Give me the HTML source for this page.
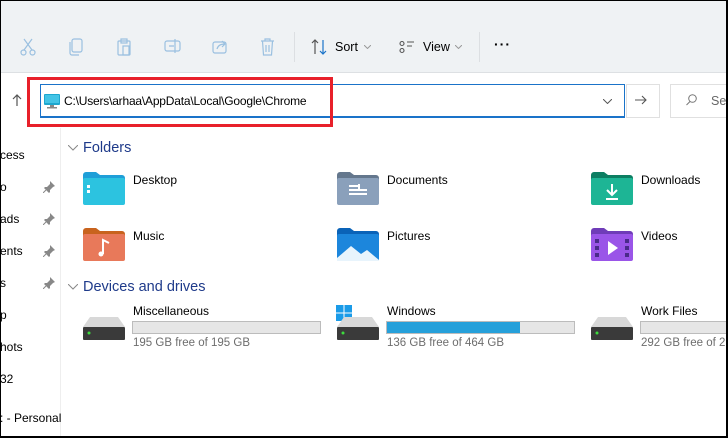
<!DOCTYPE html>
<html><head><meta charset="utf-8"><style>
*{margin:0;padding:0;box-sizing:border-box}
body{width:728px;height:438px;overflow:hidden;background:#fff;font-family:"Liberation Sans","Segoe UI",sans-serif;position:relative;color:#000}
.frame{position:absolute;left:0;top:0;width:728px;height:438px;border:1px solid #000;border-right-width:2px;border-bottom-width:2px;pointer-events:none;z-index:10}
.tb{position:absolute;left:0;top:0;width:728px;height:73px;background:#eff2f4;border-bottom:1px solid #dde0e3}
.ic{position:absolute;top:38px}
.t{position:absolute;font-size:12px;white-space:nowrap}
.sep{position:absolute;top:32px;width:1px;height:30px;background:#dcdfe2}
.addr{position:absolute;left:40px;top:84px;width:585px;height:34px;border:1px solid #1a73c9;border-bottom:2px solid #1a73c9}
.red{position:absolute;left:27px;top:77px;width:306px;height:50px;border:3px solid #e8202a;z-index:5}
.box{position:absolute;border:1px solid #e0e0e0;background:#fff}
.side{position:absolute;left:60px;top:128px;width:1px;height:310px;background:#eee}
.h{position:absolute;font-size:14.5px;color:#1e3a8a}
.bar{position:absolute;height:13px;border:1px solid #bcbcbc;background:#e6e6e6}
.sub{position:absolute;font-size:11.5px;color:#6d6d6d;white-space:nowrap}
.pin{position:absolute;left:43px}
</style></head><body>
<div class="tb"></div>
<svg class="ic" style="left:20px" width="16" height="18" viewBox="0 0 16 18" fill="none" stroke="#9ac0e0" stroke-width="1.2"><path d="M4 1l8 11M12 1L4 12"/><circle cx="3.5" cy="14.5" r="2.5"/><circle cx="12.5" cy="14.5" r="2.5"/></svg>
<svg class="ic" style="left:69px" width="14" height="18" viewBox="0 0 14 18" fill="none" stroke="#9ac0e0" stroke-width="1.2"><rect x="3" y="1" width="10" height="13" rx="2"/><path d="M1 4v11a2 2 0 0 0 2 2h7"/></svg>
<svg class="ic" style="left:117px" width="14" height="18" viewBox="0 0 14 18" fill="none" stroke="#9ac0e0" stroke-width="1.2"><rect x="1" y="3" width="12" height="14" rx="1"/><rect x="4" y="1" width="6" height="4"/><rect x="6" y="8" width="6" height="9"/></svg>
<svg class="ic" style="left:164px" width="17" height="16" viewBox="0 0 17 16" fill="none" stroke="#9ac0e0" stroke-width="1.2"><rect x="1" y="3" width="15" height="10" rx="2"/><path d="M11 1v14M5 8h5"/></svg>
<svg class="ic" style="left:212px" width="16" height="16" viewBox="0 0 16 16" fill="none" stroke="#9ac0e0" stroke-width="1.2"><rect x="1" y="4" width="13" height="11" rx="2"/><path d="M5 11c1-4 4-5 8-5M10 3l3 3-3 3"/></svg>
<svg class="ic" style="left:260px" width="15" height="18" viewBox="0 0 15 18" fill="none" stroke="#9ac0e0" stroke-width="1.2"><path d="M1 3h13M5 3V1h5v2M2.5 3l1 14h8l1-14M6 7v7M9 7v7"/></svg>
<div class="sep" style="left:294px"></div>
<svg class="ic" style="left:311px;top:39px" width="16" height="16" viewBox="0 0 16 16" fill="none" stroke-width="1.2"><path d="M4 15V1M1 4l3-3 3 3" stroke="#555"/><path d="M12 1v14M9 12l3 3 3-3" stroke="#1a73c9"/></svg>
<div class="t" style="left:335px;top:40px;font-size:12.5px">Sort</div>
<svg style="position:absolute;left:364px;top:45px" width="7" height="4"><path d="M0 0l3.5 3.5L7 0" stroke="#999" fill="none"/></svg>
<svg class="ic" style="left:399px;top:40px" width="16" height="14" viewBox="0 0 16 14" fill="none" stroke="#555" stroke-width="1.1"><circle cx="3" cy="3.5" r="2"/><circle cx="3" cy="10.5" r="2"/><path d="M8 2h7M8 6h5"/></svg>
<div class="t" style="left:423px;top:40px;font-size:12.5px">View</div>
<svg style="position:absolute;left:455px;top:45px" width="7" height="4"><path d="M0 0l3.5 3.5L7 0" stroke="#999" fill="none"/></svg>
<div class="sep" style="left:479px"></div>
<div class="t" style="left:494px;top:36px;font-size:14px;font-weight:bold;letter-spacing:1px">···</div>
<svg style="position:absolute;left:12px;top:94px" width="10" height="12"><path d="M5 12V1M1 5l4-4 4 4" stroke="#555" fill="none" stroke-width="1.2"/></svg>
<div class="addr"></div>
<svg style="position:absolute;left:44px;top:94px" width="16" height="15" viewBox="0 0 16 15"><rect x="0" y="0" width="16" height="11" rx="1" fill="#1da7cf"/><rect x="1" y="1" width="14" height="8" fill="#43c4e6"/><rect x="6" y="11" width="4" height="2" fill="#888"/><rect x="3" y="13" width="10" height="1.5" fill="#888"/></svg>
<div class="t" style="left:64px;top:94px;font-size:12px;letter-spacing:-0.2px">C:\Users\arhaa\AppData\Local\Google\Chrome</div>
<svg style="position:absolute;left:603px;top:99px" width="9" height="5"><path d="M0 0l4.5 4.5L9 0" stroke="#555" fill="none"/></svg>
<div class="box" style="left:626px;top:84px;width:34px;height:34px"></div>
<svg style="position:absolute;left:635px;top:95px" width="12" height="10"><path d="M0 5h11M7 1l4 4-4 4" stroke="#555" fill="none" stroke-width="1.1"/></svg>
<div class="box" style="left:670px;top:84px;width:70px;height:34px"></div>
<svg style="position:absolute;left:686px;top:94px" width="11" height="12"><circle cx="6.5" cy="4.5" r="3.8" stroke="#777" fill="none"/><path d="M4 7.5L0.5 11" stroke="#777"/></svg>
<div class="t" style="left:711px;top:94px;font-size:12.5px;color:#666">Sea</div>
<div class="red"></div>
<div class="side"></div>
<div class="t" style="left:0;top:148px">cess</div>
<div class="t" style="left:0;top:180px">o</div>
<div class="t" style="left:0;top:212px">ads</div>
<div class="t" style="left:0;top:244px">ents</div>
<div class="t" style="left:0;top:276px">s</div>
<div class="t" style="left:0;top:308px">p</div>
<div class="t" style="left:0;top:340px">hots</div>
<div class="t" style="left:0;top:372px">32</div>
<div class="t" style="left:0;top:411px">: - Personal</div>
<svg class="pin" style="top:181px" width="12" height="12" viewBox="0 0 12 12"><path d="M7 0l5 5-2 1-3 3 0 2-1 1-5-5 1-1 2 0 3-3z" fill="#888"/><path d="M3 9L0 12" stroke="#888"/></svg>
<svg class="pin" style="top:213px" width="12" height="12" viewBox="0 0 12 12"><path d="M7 0l5 5-2 1-3 3 0 2-1 1-5-5 1-1 2 0 3-3z" fill="#888"/><path d="M3 9L0 12" stroke="#888"/></svg>
<svg class="pin" style="top:245px" width="12" height="12" viewBox="0 0 12 12"><path d="M7 0l5 5-2 1-3 3 0 2-1 1-5-5 1-1 2 0 3-3z" fill="#888"/><path d="M3 9L0 12" stroke="#888"/></svg>
<svg class="pin" style="top:277px" width="12" height="12" viewBox="0 0 12 12"><path d="M7 0l5 5-2 1-3 3 0 2-1 1-5-5 1-1 2 0 3-3z" fill="#888"/><path d="M3 9L0 12" stroke="#888"/></svg>
<svg style="position:absolute;left:68px;top:145px" width="10" height="6"><path d="M0 0l5 5 5-5" stroke="#888" fill="none"/></svg>
<div class="h" style="left:83px;top:140px">Folders</div>
<svg style="position:absolute;left:68px;top:284px" width="10" height="6"><path d="M0 0l5 5 5-5" stroke="#888" fill="none"/></svg>
<div class="h" style="left:83px;top:279px">Devices and drives</div>
<svg style="position:absolute;left:83px;top:171px" width="42" height="34"><path d="M0 4a3 3 0 0 1 3-3h10l4 3h22a3 3 0 0 1 3 3v24a3 3 0 0 1-3 3H3a3 3 0 0 1-3-3z" fill="#1f9fd8"/><rect x="0" y="7" width="42" height="27" rx="2" fill="#2cc3e0"/><rect x="4" y="14" width="3" height="3" fill="#fff"/><rect x="4" y="19" width="3" height="3" fill="#fff"/></svg>
<div class="t" style="left:133px;top:173px">Desktop</div>
<svg style="position:absolute;left:337px;top:171px" width="42" height="34"><path d="M0 4a3 3 0 0 1 3-3h10l4 3h22a3 3 0 0 1 3 3v24a3 3 0 0 1-3 3H3a3 3 0 0 1-3-3z" fill="#64778d"/><rect x="0" y="7" width="42" height="27" rx="2" fill="#8aa0bb"/><path d="M12 15h9M12 19h18M12 23h18M22 13v6" stroke="#fff" stroke-width="2"/></svg>
<div class="t" style="left:387px;top:173px">Documents</div>
<svg style="position:absolute;left:591px;top:171px" width="42" height="34"><path d="M0 4a3 3 0 0 1 3-3h10l4 3h22a3 3 0 0 1 3 3v24a3 3 0 0 1-3 3H3a3 3 0 0 1-3-3z" fill="#0c7e62"/><rect x="0" y="7" width="42" height="27" rx="2" fill="#1db595"/><path d="M21 13v10M16 19l5 5 5-5M15 28h12" stroke="#fff" stroke-width="2" fill="none"/></svg>
<div class="t" style="left:641px;top:173px">Downloads</div>
<svg style="position:absolute;left:83px;top:227px" width="42" height="34"><path d="M0 4a3 3 0 0 1 3-3h10l4 3h22a3 3 0 0 1 3 3v24a3 3 0 0 1-3 3H3a3 3 0 0 1-3-3z" fill="#c8631e"/><rect x="0" y="7" width="42" height="27" rx="2" fill="#e8795a"/><path d="M20 27V13l6 3" stroke="#fff" stroke-width="2" fill="none"/><circle cx="18" cy="27" r="2.5" fill="#fff"/></svg>
<div class="t" style="left:133px;top:229px">Music</div>
<svg style="position:absolute;left:337px;top:227px" width="42" height="34"><path d="M0 4a3 3 0 0 1 3-3h10l4 3h22a3 3 0 0 1 3 3v24a3 3 0 0 1-3 3H3a3 3 0 0 1-3-3z" fill="#0a63b8"/><rect x="0" y="7" width="42" height="27" rx="2" fill="#1c86dc"/><path d="M0 31l14-12 10 8 6-4 12 10v1H0z" fill="#e8f4fc"/></svg>
<div class="t" style="left:387px;top:229px">Pictures</div>
<svg style="position:absolute;left:591px;top:227px" width="42" height="34"><path d="M0 4a3 3 0 0 1 3-3h10l4 3h22a3 3 0 0 1 3 3v24a3 3 0 0 1-3 3H3a3 3 0 0 1-3-3z" fill="#6f3cb8"/><rect x="0" y="7" width="42" height="27" rx="2" fill="#9a55e8"/><path d="M17 14v14l10-7z" fill="#fff"/><rect x="4" y="12" width="4" height="4" fill="#4a2a8a"/><rect x="4" y="19" width="4" height="4" fill="#4a2a8a"/><rect x="4" y="26" width="4" height="4" fill="#4a2a8a"/><rect x="34" y="12" width="4" height="4" fill="#4a2a8a"/><rect x="34" y="19" width="4" height="4" fill="#4a2a8a"/><rect x="34" y="26" width="4" height="4" fill="#4a2a8a"/></svg>
<div class="t" style="left:641px;top:229px">Videos</div>
<svg style="position:absolute;left:83px;top:317px" width="42" height="24"><path d="M7 0h28l7 10H0z" fill="#d8d8d8"/><rect x="0" y="10" width="42" height="13" rx="1" fill="#3a3a3a"/><circle cx="6" cy="16" r="1.5" fill="#3ddc3d"/></svg>
<div class="t" style="left:133px;top:304px">Miscellaneous</div>
<div class="bar" style="left:132px;top:321px;width:189px"></div>
<div class="sub" style="left:133px;top:337px">195 GB free of 195 GB</div>
<svg style="position:absolute;left:336px;top:305px" width="16" height="16"><rect x="0" y="0" width="7.5" height="7.5" fill="#1a9be8"/><rect x="8.5" y="0" width="7.5" height="7.5" fill="#1a9be8"/><rect x="0" y="8.5" width="7.5" height="7.5" fill="#1a9be8"/><rect x="8.5" y="8.5" width="7.5" height="7.5" fill="#1a9be8"/></svg>
<svg style="position:absolute;left:337px;top:317px" width="42" height="24"><path d="M7 0h28l7 10H0z" fill="#d8d8d8"/><rect x="0" y="10" width="42" height="13" rx="1" fill="#3a3a3a"/><circle cx="6" cy="16" r="1.5" fill="#3ddc3d"/></svg>
<div class="t" style="left:387px;top:304px">Windows</div>
<div class="bar" style="left:386px;top:321px;width:189px"><div style="width:133px;height:11px;background:#26a0da"></div></div>
<div class="sub" style="left:387px;top:337px">136 GB free of 464 GB</div>
<svg style="position:absolute;left:591px;top:317px" width="42" height="24"><path d="M7 0h28l7 10H0z" fill="#d8d8d8"/><rect x="0" y="10" width="42" height="13" rx="1" fill="#3a3a3a"/><circle cx="6" cy="16" r="1.5" fill="#3ddc3d"/></svg>
<div class="t" style="left:641px;top:304px">Work Files</div>
<div class="bar" style="left:640px;top:321px;width:100px"></div>
<div class="sub" style="left:641px;top:337px">292 GB free of 292 GB</div>
<div class="frame"></div>
</body></html>
